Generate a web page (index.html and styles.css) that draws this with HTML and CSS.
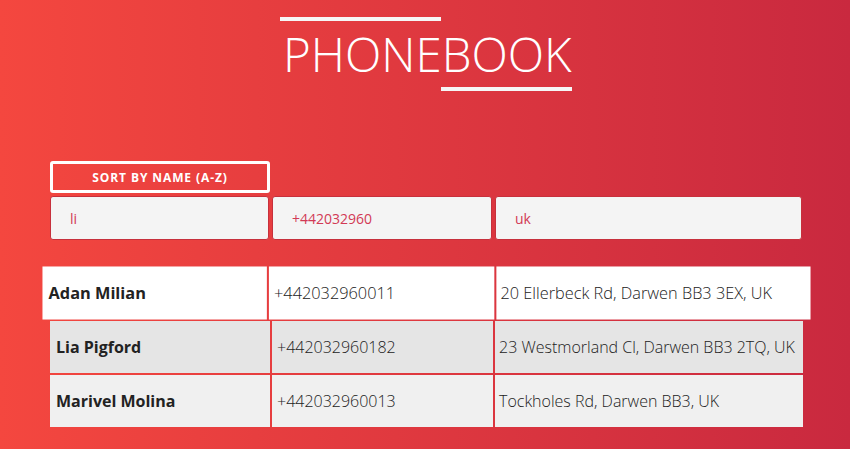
FILE: index.html
```html
<!DOCTYPE html>
<html>
<head>
<meta charset="utf-8">
<link rel="stylesheet" href="styles.css">
</head>
<body>
<div class="page">
  <header class="title">
    <div class="bar bar-top"></div>
    <h1 class="title-text">PHONEBOOK</h1>
    <div class="bar bar-bottom"></div>
  </header>
  <div class="content">
    <button class="sort-btn">SORT BY NAME (A-Z)</button>
    <div class="filters">
      <input class="filter" type="text" value="li">
      <input class="filter" type="text" value="+442032960">
      <input class="filter" type="text" value="uk">
    </div>
    <div class="table">
      <div class="row row-hover">
        <div class="cell name">Adan Milian</div>
        <div class="cell phone">+442032960011</div>
        <div class="cell addr">20 Ellerbeck Rd, Darwen BB3 3EX, UK</div>
      </div>
      <div class="row row-even">
        <div class="cell name">Lia Pigford</div>
        <div class="cell phone">+442032960182</div>
        <div class="cell addr">23 Westmorland Cl, Darwen BB3 2TQ, UK</div>
      </div>
      <div class="row row-odd">
        <div class="cell name">Marivel Molina</div>
        <div class="cell phone">+442032960013</div>
        <div class="cell addr">Tockholes Rd, Darwen BB3, UK</div>
      </div>
    </div>
  </div>
</div>
</body>
</html>
```
FILE: styles.css
```css
html, body {
  margin: 0;
  padding: 0;
  height: 100%;
}
body {
  background: linear-gradient(to right, #f4473f 0%, #c9293f 100%);
  font-family: "Open Sans", "Liberation Sans", sans-serif;
  overflow: hidden;
}
.page {
  padding-top: 17px;
}
.title {
  width: 292px;
  margin-left: 280px;
  display: flex;
  flex-direction: column;
}
.bar {
  height: 4px;
  background: #f6f6f6;
}
.bar-top {
  width: 161px;
  align-self: flex-start;
}
.bar-bottom {
  width: 131px;
  align-self: flex-end;
}
.title-text {
  margin: 10px 0 10px 3px;
  font-size: 47.5px;
  line-height: 46px;
  font-weight: 300;
  color: #ffffff;
  white-space: nowrap;
}
.content {
  margin-top: 70px;
  padding-left: 50px;
  width: 753px;
}
.sort-btn {
  display: block;
  width: 220px;
  height: 32px;
  box-sizing: border-box;
  border: 3px solid #ffffff;
  border-radius: 3px;
  background: transparent;
  color: #ffffff;
  font-family: "Open Sans", "Liberation Sans", sans-serif;
  font-weight: 700;
  font-size: 12px;
  letter-spacing: 0.9px;
  padding: 0;
  margin: 0;
}
.filters {
  display: grid;
  grid-template-columns: 219px 220px 307px;
  column-gap: 3px;
  margin-top: 3px;
}
.filter {
  height: 44px;
  box-sizing: border-box;
  border: 1px solid #c7303c;
  border-radius: 3px;
  background: #f4f4f4;
  padding: 0 0 0 19px;
  margin: 0;
  font-family: "Open Sans", "Liberation Sans", sans-serif;
  font-size: 14px;
  color: #d23a55;
  outline: none;
}
.table {
  margin-top: 27px;
  display: flex;
  flex-direction: column;
  row-gap: 2px;
}
.row {
  display: grid;
  grid-template-columns: 220px 221px 308px;
  column-gap: 2px;
  height: 52px;
}
.row-hover {
  transform: scale(1.02);
}
.row-hover .cell {
  background: #ffffff;
}
.row-even .cell {
  background: #e5e5e5;
}
.row-odd .cell {
  background: #f0f0f0;
}
.cell {
  display: flex;
  align-items: center;
  font-size: 16px;
  color: #222222;
}
.name {
  font-weight: 700;
  padding-left: 6px;
}
.phone {
  font-weight: 300;
  padding-left: 5px;
}
.addr {
  font-weight: 300;
  padding-left: 4px;
}
```
